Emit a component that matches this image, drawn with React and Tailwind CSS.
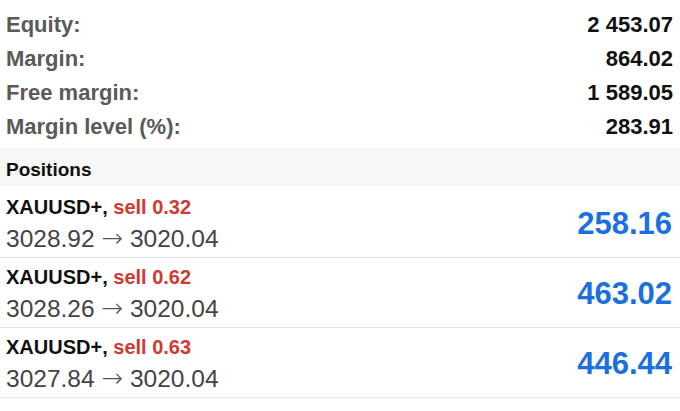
import React from 'react';

const summary = [
    { label: 'Equity:', value: '2 453.07' },
    { label: 'Margin:', value: '864.02' },
    { label: 'Free margin:', value: '1 589.05' },
    { label: 'Margin level (%):', value: '283.91' },
];

const positions = [
    { symbol: 'XAUUSD+', side: 'sell 0.32', open: '3028.92', current: '3020.04', profit: '258.16' },
    { symbol: 'XAUUSD+', side: 'sell 0.62', open: '3028.26', current: '3020.04', profit: '463.02' },
    { symbol: 'XAUUSD+', side: 'sell 0.63', open: '3027.84', current: '3020.04', profit: '446.44' },
];

const App = () => {
    return (
        <div className="w-[680px] h-[411px] overflow-hidden bg-white font-['Liberation_Sans',Arial,sans-serif]">
            {/* Account summary */}
            <div className="pt-[7.5px] pl-[6px] pr-[7px]">
                {summary.map((row) => (
                    <div key={row.label} className="flex justify-between text-[22px] font-bold leading-[34px]">
                        <span className="text-[#5a5a5a]">{row.label}</span>
                        <span className="text-[#111]">{row.value}</span>
                    </div>
                ))}
            </div>

            {/* Section header */}
            <div className="mt-[4.5px] h-[38px] bg-[#f7f7f7] pl-[6px] pt-[11px]">
                <span className="text-[19px] font-bold leading-[20px] text-[#111]">Positions</span>
            </div>

            {/* Open positions */}
            <div className="pt-[2px]">
                {positions.map((p) => (
                    <div key={p.side} className="flex h-[70px] justify-between border-b border-[#e6e6e6] pl-[6px] pr-[8px]">
                        <div className="pt-[7px]">
                            <div className="text-[20px] font-bold leading-[24px]">
                                <span className="text-[#111]">{p.symbol}, </span>
                                <span className="text-[#cf3a32]">{p.side}</span>
                            </div>
                            <div className="mt-[5.5px] text-[24.5px] leading-[28px] text-[#444]">
                                {p.open}{' '}
                                <span className="font-['DejaVu_Sans',sans-serif] text-[26px] font-extralight leading-none text-[#555]">→</span>
                                {' '}{p.current}
                            </div>
                        </div>
                        <div className="mt-[18px] text-[31px] font-bold leading-[36px] text-[#1c6fdf]">
                            {p.profit}
                        </div>
                    </div>
                ))}
            </div>
        </div>
    );
};

export default App;
